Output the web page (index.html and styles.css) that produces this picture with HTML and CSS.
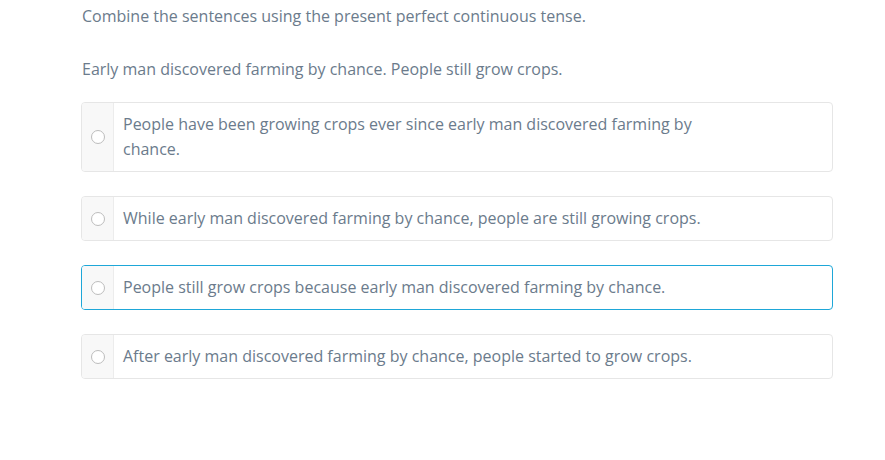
FILE: index.html
```html
<!DOCTYPE html>
<html lang="en">
<head>
    <meta charset="UTF-8">
    <title>Quiz Question</title>
    <link rel="stylesheet" href="styles.css">
</head>
<body>

<div class="question">
    <p class="prompt">Combine the sentences using the present perfect continuous tense.</p>
    <p class="prompt">Early man discovered farming by chance. People still grow crops.</p>

    <div class="options">
        <label class="option">
            <span class="option-radio"><span class="circle"></span></span>
            <span class="option-text">People have been growing crops ever since early man discovered farming by chance.</span>
        </label>
        <label class="option">
            <span class="option-radio"><span class="circle"></span></span>
            <span class="option-text">While early man discovered farming by chance, people are still growing crops.</span>
        </label>
        <label class="option selected">
            <span class="option-radio"><span class="circle"></span></span>
            <span class="option-text">People still grow crops because early man discovered farming by chance.</span>
        </label>
        <label class="option">
            <span class="option-radio"><span class="circle"></span></span>
            <span class="option-text">After early man discovered farming by chance, people started to grow crops.</span>
        </label>
    </div>
</div>

</body>
</html>
```

FILE: styles.css
```css
body {
    font-family: "Open Sans", Arial, sans-serif;
    font-size: 16px;
    color: #6b7b8c;
    background-color: #fff;
    margin: 0;
    padding: 0;
}
.question {
    width: 752px;
    margin-left: 81px;
    padding-top: 4px;
}
.prompt {
    margin: 0 0 28px 1px;
    line-height: 25px;
}
.prompt + .prompt {
    margin-bottom: 20px;
}

/* Answer options */
.options {
    display: flex;
    flex-direction: column;
    gap: 24px;
}
.option {
    display: flex;
    border: 1px solid #e6e6e6;
    border-radius: 4px;
    background-color: #fff;
    cursor: pointer;
    overflow: hidden;
}
.option.selected {
    border-color: #1ea7d8;
}
.option-radio {
    width: 31px;
    flex-shrink: 0;
    background-color: #f8f8f8;
    border-right: 1px solid #ececec;
    display: flex;
    align-items: center;
    justify-content: center;
}
.circle {
    width: 12px;
    height: 12px;
    border: 1px solid #bdbdbd;
    border-radius: 50%;
    background-color: #fff;
}
.option-text {
    padding: 9px 10px 9px 9px;
    line-height: 25px;
    max-width: 600px;
}
```
